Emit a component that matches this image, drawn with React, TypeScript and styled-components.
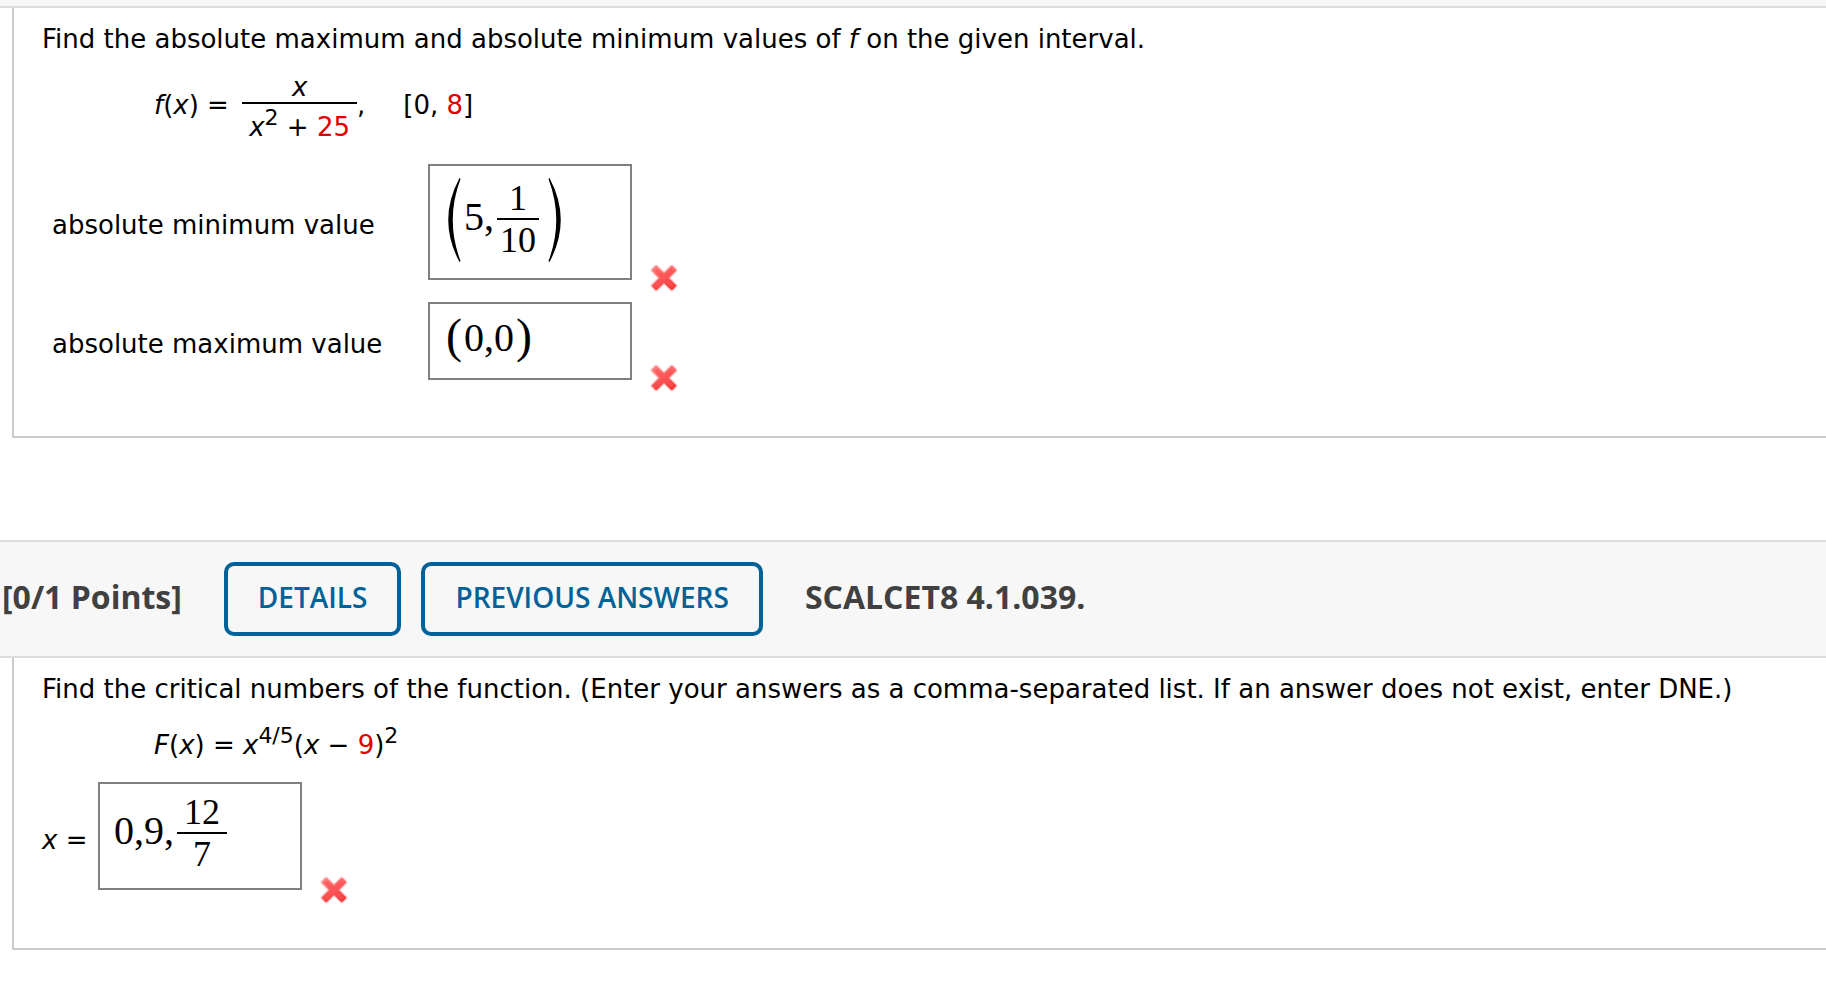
import React from 'react';
import styled, { createGlobalStyle } from 'styled-components';

const GlobalStyle = createGlobalStyle`
  *, *::before, *::after { box-sizing: border-box; }
  body {
    margin: 0;
    background: #fff;
    color: #000;
    font-family: Verdana, "DejaVu Sans", sans-serif;
    font-size: 26px;
    line-height: 30px;
  }
`;

const HeaderBar = styled.header`
  display: flex;
  align-items: center;
  gap: 42px;
  padding: 20px 0 20px 2px;
  background: #f7f7f7;
  border: solid #ddd;
  border-width: 2px 0;
  font-family: "Open Sans", sans-serif;
`;

const HeaderEdge = styled.div`
  height: 8px;
  background: #f7f7f7;
  border-bottom: 2px solid #ddd;
`;

const HeaderText = styled.h2`
  margin: 0;
  padding-bottom: 4px;
  color: #404040;
  font-size: 32px;
  line-height: 40px;
  font-weight: 700;
  white-space: nowrap;
`;

const ButtonGroup = styled.div`
  display: flex;
  gap: 20px;
`;

const OutlineButton = styled.button`
  height: 74px;
  padding: 0 30px 4px;
  border: 4px solid #006298;
  border-radius: 10px;
  background: transparent;
  color: #006298;
  font: 600 28px/40px "Open Sans", sans-serif;
  white-space: nowrap;
  cursor: pointer;
`;

const Card = styled.section<{ $gap?: number }>`
  margin: 0 0 ${p => p.$gap ?? 0}px 12px;
  padding: 16px 0 44px 28px;
  border: solid #ccc;
  border-width: 0 0 2px 2px;
`;

const Prompt = styled.p`
  margin: 0;
`;

const Equation = styled.div<{ $top: number }>`
  display: flex;
  align-items: center;
  margin: ${p => p.$top}px 0 22px 112px;
  white-space: pre;
`;

const Sup = styled.sup`
  font-size: 22px;
  line-height: 0;
  vertical-align: 11px;
`;

const Red = styled.span`
  color: #e00000;
`;

const Quotient = styled.span`
  display: flex;
  flex-direction: column;
  align-items: center;
  margin-left: 5px;
  padding-top: 4px;
`;

const Denominator = styled.span`
  padding: 8px 7px 0;
  border-top: 2px solid #000;
`;

const Interval = styled.span`
  margin-left: 38px;
`;

const AnswerRows = styled.div`
  display: flex;
  flex-direction: column;
  gap: 10px;
  padding-left: 10px;
`;

const AnswerRow = styled.div`
  display: flex;
  align-items: center;
`;

const Label = styled.span<{ $width: number }>`
  flex: 0 0 ${p => p.$width}px;
  padding-bottom: 6px;
`;

const AnswerCell = styled.div<{ $drop: number }>`
  display: flex;
  align-items: flex-end;
  gap: 18px;

  > :first-child {
    margin-bottom: ${p => p.$drop}px;
  }
`;

const MathBox = styled.div`
  display: flex;
  align-items: center;
  min-width: 204px;
  padding: 10px 14px 16px;
  border: 2px solid #808080;
  font-family: "Liberation Serif", serif;
  font-size: 40px;
  line-height: 40px;
`;

const MathText = styled.span<{ $lift?: boolean }>`
  padding-bottom: ${p => (p.$lift ? 4 : 0)}px;
`;

const Paren = styled.span`
  margin: 0 2px;
  font-size: 48px;
  line-height: 44px;
  padding-bottom: 4px;
`;

const Fraction = styled.span<{ $pad: number }>`
  display: flex;
  flex-direction: column;
  margin: 0 6px 0 3px;
  font-size: 36px;
  line-height: 36px;
  text-align: center;

  > span {
    padding: 0 ${p => p.$pad}px 2px;
  }
  > span:last-child {
    padding: 2px ${p => p.$pad}px 0;
    border-top: 2px solid #000;
  }
`;

const TallParenSvg = styled.svg`
  width: 16px;
  height: 86px;
  margin: 0 2px;
`;

const IconSvg = styled.svg`
  width: 28px;
  height: 28px;
`;

function TallParen({ side }: { side: 'left' | 'right' }) {
  const d =
    side === 'left'
      ? 'M13.5 2 Q-9 44 13.5 86 L14.5 85 Q-1 44 14.5 3 Z'
      : 'M2.5 2 Q25 44 2.5 86 L1.5 85 Q17 44 1.5 3 Z';
  return (
    <TallParenSvg viewBox="0 0 16 86" role="img" aria-label={side + ' parenthesis'}>
      <path d={d} />
    </TallParenSvg>
  );
}

function WrongIcon({ id }: { id: string }) {
  return (
    <IconSvg viewBox="0.6 0.6 26.8 26.8" role="img" aria-label="Incorrect">
      <defs>
        <linearGradient id={id} x1="0" y1="0" x2="0.4" y2="1">
          <stop offset="0" stopColor="#ff8585" />
          <stop offset="1" stopColor="#f53c3c" />
        </linearGradient>
      </defs>
      <path
        d="M5.4 2.2 Q6.5 1.2 7.6 2.2 L14 8.4 20.4 2.2 Q21.5 1.2 22.6 2.2 L26 5.6 Q26.8 6.6 26 7.6 L19.6 14 26 20.4 Q26.8 21.4 26 22.4 L22.6 25.8 Q21.5 26.8 20.4 25.8 L14 19.6 7.6 25.8 Q6.5 26.8 5.4 25.8 L2 22.4 Q1.2 21.4 2 20.4 L8.4 14 2 7.6 Q1.2 6.6 2 5.6 Z"
        fill={`url(#${id})`}
        stroke="#ffcaca"
        strokeWidth="1.2"
        strokeLinejoin="round"
      />
      <path d="M7 7 21 21M21 7 7 21" stroke="#ff5055" strokeWidth="3" strokeLinecap="round" opacity="0.6" />
    </IconSvg>
  );
}

interface AnswerProps {
  id: string;
  label: React.ReactNode;
  labelWidth: number;
  drop?: number;
  children: React.ReactNode;
}

function Answer({ id, label, labelWidth, drop = 12, children }: AnswerProps) {
  return (
    <AnswerRow>
      <Label id={id} $width={labelWidth}>{label}</Label>
      <AnswerCell $drop={drop}>
        <MathBox role="textbox" aria-readonly="true" tabIndex={0} aria-labelledby={id}>
          {children}
        </MathBox>
        <WrongIcon id={id + '-mark'} />
      </AnswerCell>
    </AnswerRow>
  );
}

export default function App() {
  return (
    <main>
      <GlobalStyle />
      <HeaderEdge />
      <Card $gap={102}>
        <Prompt>
          Find the absolute maximum and absolute minimum values of <i>f</i> on the given interval.
        </Prompt>
        <Equation $top={14}>
          <span><i>f</i>(<i>x</i>) = </span>
          <Quotient>
            <i>x</i>
            <Denominator><i>x</i><Sup>2</Sup> + <Red>25</Red></Denominator>
          </Quotient>
          <span>,</span>
          <Interval>[0, <Red>8</Red>]</Interval>
        </Equation>
        <AnswerRows>
          <Answer id="minimum" label="absolute minimum value" labelWidth={376}>
            <TallParen side="left" />
            <MathText $lift>5,</MathText>
            <Fraction $pad={3}><span>1</span><span>10</span></Fraction>
            <TallParen side="right" />
          </Answer>
          <Answer id="maximum" label="absolute maximum value" labelWidth={376}>
            <Paren>(</Paren>
            <MathText>0,0</MathText>
            <Paren>)</Paren>
          </Answer>
        </AnswerRows>
      </Card>

      <HeaderBar>
        <HeaderText>[0/1 Points]</HeaderText>
        <ButtonGroup>
          <OutlineButton type="button">DETAILS</OutlineButton>
          <OutlineButton type="button">PREVIOUS ANSWERS</OutlineButton>
        </ButtonGroup>
        <HeaderText>SCALCET8 4.1.039.</HeaderText>
      </HeaderBar>

      <Card>
        <Prompt>
          Find the critical numbers of the function. (Enter your answers as a comma-separated list. If an answer does not exist, enter DNE.)
        </Prompt>
        <Equation $top={26}>
          <span>
            <i>F</i>(<i>x</i>) = <i>x</i><Sup>4/5</Sup>(<i>x</i> − <Red>9</Red>)<Sup>2</Sup>
          </span>
        </Equation>
        <Answer id="critical" label={<><i>x</i> =</>} labelWidth={56} drop={14}>
          <MathText $lift>0,9,</MathText>
          <Fraction $pad={7}><span>12</span><span>7</span></Fraction>
        </Answer>
      </Card>
    </main>
  );
}
